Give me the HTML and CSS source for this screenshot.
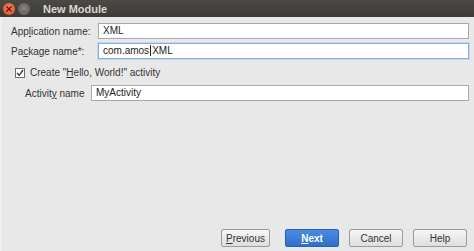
FILE: index.html
```html
<!DOCTYPE html>
<html lang="en">
<head>
  <meta charset="UTF-8">
  <title>New Module</title>
  <link rel="stylesheet" href="styles.css">
</head>
<body>

<div class="window">

  <!-- TITLE BAR -->
  <div class="titlebar">
    <span class="wbtn close">
      <svg width="8" height="8" viewBox="0 0 8 8"><path d="M1.5 1.5 L6.5 6.5 M6.5 1.5 L1.5 6.5" stroke="#5a1a0a" stroke-width="1.4"/></svg>
    </span>
    <span class="wbtn max"></span>
    <span class="title">New Module</span>
  </div>

  <!-- FORM -->
  <div class="form">
    <div class="field-grid">
      <label>App<u>l</u>ication name:</label>
      <div class="input">XML</div>
      <label>Pa<u>c</u>kage name*:</label>
      <div class="input focused">com.amos<span class="caret"></span>XML</div>
    </div>

    <div class="check-row">
      <span class="checkbox">
        <svg width="8" height="8" viewBox="0 0 8 8"><path d="M1 4 L3.2 6.3 L7 1" fill="none" stroke="#333" stroke-width="1.3"/></svg>
      </span>
      <span>Create "<u>H</u>ello, World!" activity</span>
    </div>

    <div class="sub-row">
      <label>Activit<u>y</u> name</label>
      <div class="input">MyActivity</div>
    </div>
  </div>

  <!-- FOOTER BUTTONS -->
  <div class="footer">
    <button class="btn prev"><u>P</u>revious</button>
    <button class="btn primary"><u>N</u>ext</button>
    <button class="btn">Cancel</button>
    <button class="btn">Help</button>
  </div>

</div>

</body>
</html>
```

FILE: styles.css
```css
/* --- Global --- */
body { margin: 0; font-family: "Liberation Sans", Arial, sans-serif; font-size: 10px; color: #333; background: #e8e8e8; }
u { text-decoration: underline; text-underline-offset: 1px; }

.window { height: 251px; display: flex; flex-direction: column; background: #e8e8e8; border-left: 2px solid #f0f0f0; box-sizing: border-box; }

/* --- Title bar --- */
.titlebar {
  height: 17px; display: flex; align-items: center; padding-left: 2px;
  background: linear-gradient(#4a4945, #3c3b37);
  margin-left: -2px;
}
.wbtn { width: 12px; height: 12px; border-radius: 50%; display: flex; align-items: center; justify-content: center; box-sizing: border-box; }
.wbtn.close { background: radial-gradient(circle at 50% 40%, #f5845a, #df4a1c); margin-left: 1px; }
.wbtn.max { background: radial-gradient(circle at 50% 40%, #8b8a86, #5e5d59); margin-left: 3px; border: 2px solid #6d6c68; }
.title { color: #dcd8cf; font-weight: bold; font-size: 11px; margin-left: 13px; }

/* --- Form --- */
.form { flex: 1; padding: 6px 5px 0 9px; }
.field-grid { display: grid; grid-template-columns: 87px 1fr; row-gap: 4px; align-items: center; }
.input {
  height: 16px; box-sizing: border-box; background: #fff; border: 1px solid #a9a9a9;
  padding-left: 4px; line-height: 14px; font-size: 10px; color: #222;
}
.input.focused { border-color: #86aee0; box-shadow: 0 0 0 1px #c3d8f0; }
.caret { display: inline-block; width: 1px; height: 11px; background: #222; vertical-align: -2px; margin: 0 1px; }

.check-row { display: flex; align-items: center; gap: 5px; margin: 8px 0 0 4px; }
.checkbox { width: 10px; height: 10px; box-sizing: border-box; border: 1px solid #6e6e6e; background: #fff; display: flex; align-items: center; justify-content: center; }

.sub-row { display: grid; grid-template-columns: 66px 1fr; align-items: center; margin: 7px 0 0 14px; }

/* --- Footer --- */
.footer { display: flex; justify-content: flex-end; gap: 10px; padding: 0 7px 4px 0; }
.btn {
  height: 18px; width: 54px; padding: 0; font-family: inherit; font-size: 10px; color: #333;
  border: 1px solid #9c9c9c; border-radius: 2px; background: linear-gradient(#f6f6f6, #dedede);
}
.btn.prev { width: 49px; margin-right: 5px; }
.btn.primary { background: linear-gradient(#4b8ce0, #2f6fc8); border-color: #2a5fae; color: #fff; font-weight: bold; }
```
